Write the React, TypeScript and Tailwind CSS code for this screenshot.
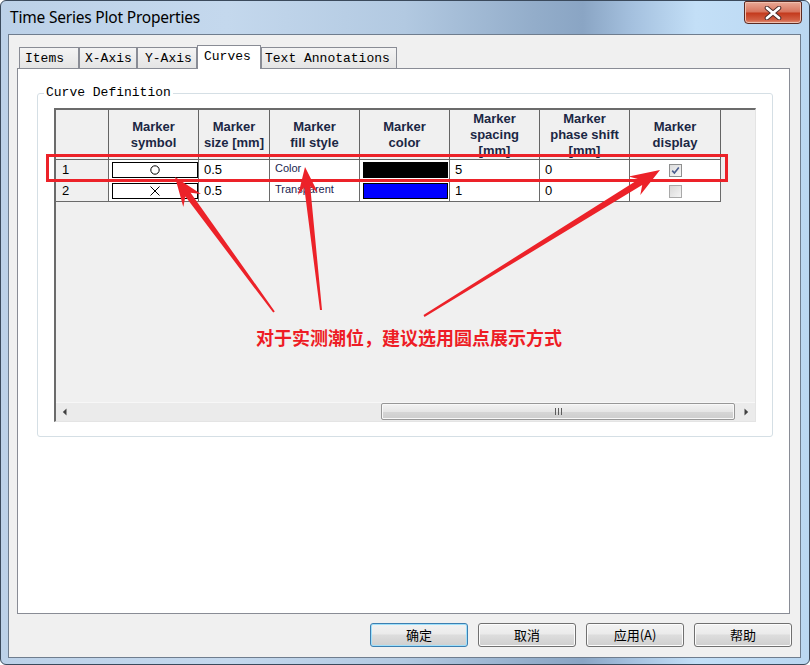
import React from "react";

const colW = [53, 90, 71, 90, 90, 90, 90, 91];

const headers: string[][] = [
  [],
  ["Marker", "symbol"],
  ["Marker", "size [mm]"],
  ["Marker", "fill style"],
  ["Marker", "color"],
  ["Marker", "spacing", "[mm]"],
  ["Marker", "phase shift", "[mm]"],
  ["Marker", "display"],
];

function arrowPts(tx: number, ty: number, hx: number, hy: number, headLen = 26, headHalf = 10, shaftHalf = 3.2, tailHalf = 1) {
  const dx = hx - tx;
  const dy = hy - ty;
  const L = Math.sqrt(dx * dx + dy * dy);
  const ux = dx / L;
  const uy = dy / L;
  const nx = -uy;
  const ny = ux;
  const bx = hx - ux * headLen;
  const by = hy - uy * headLen;
  const p = (x: number, y: number) => `${x.toFixed(1)},${y.toFixed(1)}`;
  return [
    p(tx + nx * tailHalf, ty + ny * tailHalf),
    p(bx + ux * 5 + nx * shaftHalf, by + uy * 5 + ny * shaftHalf),
    p(bx - ux * 2 + nx * headHalf, by - uy * 2 + ny * headHalf),
    p(hx, hy),
    p(bx - ux * 2 - nx * headHalf, by - uy * 2 - ny * headHalf),
    p(bx + ux * 5 - nx * shaftHalf, by + uy * 5 - ny * shaftHalf),
    p(tx - nx * tailHalf, ty - ny * tailHalf),
  ].join(" ");
}

function Checkbox({ checked }: { checked: boolean }) {
  return (
    <div
      className={
        "w-[13px] h-[13px] border flex items-center justify-center " +
        (checked
          ? "border-[#8e8f8f] bg-[linear-gradient(135deg,#dcdcdc,#f6f6f6)]"
          : "border-[#a9a9a9] bg-[linear-gradient(135deg,#d8d8d8,#f4f4f4)]")
      }
    >
      {checked && (
        <svg width="11" height="11" viewBox="0 0 11 11">
          <path d="M2.2 5.6 L4.4 8 L8.8 2.4" fill="none" stroke="#4b5d8f" strokeWidth="1.6" />
        </svg>
      )}
    </div>
  );
}

function DataRow({ idx, symbol, size, fill, color, spacing, phase, checked }: {
  idx: string; symbol: "o" | "x"; size: string; fill: string; color: string; spacing: string; phase: string; checked: boolean;
}) {
  const cell = "h-[21px] border-r border-b border-[#6a6a6a] flex items-center shrink-0";
  return (
    <div className="flex">
      <div className={cell + " bg-[#f0f0f0] pl-[6px] text-[13px] text-black"} style={{ width: colW[0] }}>{idx}</div>
      <div className={cell + " bg-white pl-[3px]"} style={{ width: colW[1] }}>
        <div className="w-[86px] h-[16px] border border-black bg-white flex items-center justify-center">
          {symbol === "o" ? (
            <svg width="12" height="12" viewBox="0 0 12 12"><circle cx="6" cy="6" r="4.2" fill="none" stroke="#000" strokeWidth="1" /></svg>
          ) : (
            <svg width="12" height="12" viewBox="0 0 12 12"><path d="M1.5 1.5 L10.5 10.5 M10.5 1.5 L1.5 10.5" stroke="#000" strokeWidth="1" /></svg>
          )}
        </div>
      </div>
      <div className={cell + " bg-white pl-[5px] text-[13px] text-black"} style={{ width: colW[2] }}>{size}</div>
      <div className={"h-[21px] border-r border-b border-[#6a6a6a] shrink-0 bg-white pl-[5px] pt-[1px] text-[11px] leading-[14px] text-[#1a2550]"} style={{ width: colW[3] }}>{fill}</div>
      <div className={cell + " bg-white pl-[3px]"} style={{ width: colW[4] }}>
        <div className="w-[85px] h-[16px] border border-black" style={{ background: color }} />
      </div>
      <div className={cell + " bg-white pl-[5px] text-[13px] text-black"} style={{ width: colW[5] }}>{spacing}</div>
      <div className={cell + " bg-white pl-[5px] text-[13px] text-black"} style={{ width: colW[6] }}>{phase}</div>
      <div className={cell + " bg-white justify-center pl-[1px]"} style={{ width: colW[7] }}>
        <Checkbox checked={checked} />
      </div>
    </div>
  );
}

function Tab({ label, w, pl, selected }: { label: string; w: number; pl: number; selected?: boolean }) {
  return (
    <div
      className={
        "border-x border-t border-[#898c95] flex justify-start shrink-0 text-[13px] text-black whitespace-nowrap " +
        (selected
          ? "h-[24px] -mb-px bg-white relative z-10 items-start pt-[3px] leading-[16px]"
          : "h-[21px] bg-[linear-gradient(#f4f4f4,#e4e4e4)] items-center leading-[16px] pt-[2px]")
      }
      style={{ width: w, paddingLeft: pl }}
    >
      {label}
    </div>
  );
}

function Button({ label, focused }: { label: string; focused?: boolean }) {
  return (
    <div
      className={
        "w-[98px] h-[24px] rounded-[3px] border flex items-center justify-center text-[13px] text-black font-['Noto_Sans_CJK_SC','Noto_Sans',sans-serif] bg-[linear-gradient(#f2f2f2_0%,#ebebeb_45%,#dddddd_50%,#cfcfcf_100%)] " +
        (focused ? "border-[#3c7fb1] shadow-[inset_0_0_0_1px_#9fe0fb]" : "border-[#707070] shadow-[inset_0_0_0_1px_#fcfcfc]")
      }
    >
      {label}
    </div>
  );
}

export default function App() {
  return (
    <div className="relative w-[810px] h-[665px] font-['Liberation_Sans',Arial,sans-serif]">
      <div className="w-[810px] h-[665px] flex flex-col rounded-[6px] border border-[#3b4a5c] bg-[linear-gradient(90deg,#bcd1e8_0%,#c4d8ed_28%,#b2c9e1_50%,#93adca_66%,#8aa5c4_72%,#a4c0de_78%,#c3dff7_86%,#bad7f1_100%)] overflow-hidden">
        {/* Title bar */}
        <div className="h-[33px] flex items-start shrink-0">
          <div className="pl-[9px] pt-[6px] text-[15.5px] leading-[20px] text-black font-['Noto_Sans',sans-serif] tracking-[-0.2px]">
            Time Series Plot Properties
          </div>
          <div className="ml-auto mr-[7px] mt-0 w-[58px] h-[23px] rounded-b-[4px] rounded-t-[2px] border border-[#5b2a22] bg-[linear-gradient(#e9a996_0%,#d7735c_48%,#c3391c_52%,#d25f43_85%,#e0937b_100%)] shadow-[inset_0_0_0_1px_#f0c0b0] flex items-center justify-center">
            <svg width="20" height="14" viewBox="0 0 20 14">
              <path d="M4 2 L16 12 M16 2 L4 12" stroke="#4a2a28" strokeWidth="4.6" strokeLinecap="round" />
              <path d="M4 2 L16 12 M16 2 L4 12" stroke="#ffffff" strokeWidth="2.8" strokeLinecap="round" />
            </svg>
          </div>
        </div>

        {/* Client area */}
        <div className="ml-[7px] w-[793px] h-[624px] border border-[#6f7d8e] bg-[#f0f0f0] flex flex-col shrink-0">
          {/* Tabs */}
          <div className="mt-[10px] ml-[10px] h-[23px] flex items-end font-['Liberation_Mono',monospace]">
            <Tab label="Items" w={60} pl={5} />
            <Tab label="X-Axis" w={58} pl={5} />
            <Tab label="Y-Axis" w={60} pl={7} />
            <Tab label="Curves" w={64} pl={6} selected />
            <Tab label="Text Annotations" w={136} pl={3} />
          </div>

          {/* Tab panel */}
          <div className="ml-[8px] w-[773px] h-[546px] border border-[#898c95] bg-white shrink-0">
            {/* Group box */}
            <div className="relative ml-[19px] mt-[24px] w-[736px] h-[344px] border border-[#d5dfe5] rounded-[3px]">
              <span className="absolute -top-[9px] left-[6px] bg-white px-[2px] text-[13px] leading-[16px] text-black font-['Liberation_Mono',monospace]">
                Curve Definition
              </span>

              {/* Grid */}
              <div className="ml-[16px] mt-[14px] w-[702px] h-[314px] border-t-2 border-l-2 border-[#6b6b6b] border-r border-b border-r-[#e4e4e4] border-b-[#e4e4e4] bg-[#f0f0f0] flex flex-col">
                {/* Header */}
                <div className="flex">
                  {headers.map((h, i) => (
                    <div
                      key={i}
                      className="h-[50px] border-r border-b border-[#646464] bg-[#f0f0f0] flex flex-col items-center justify-center overflow-hidden text-center leading-[16px] font-bold text-[13px] text-[#1b2744] shrink-0"
                      style={{ width: colW[i] }}
                    >
                      {h.map((t, j) => (
                        <div key={j} className="whitespace-nowrap">{t}</div>
                      ))}
                    </div>
                  ))}
                </div>
                <DataRow idx="1" symbol="o" size="0.5" fill="Color" color="#000000" spacing="5" phase="0" checked={true} />
                <DataRow idx="2" symbol="x" size="0.5" fill="Transparent" color="#0000ff" spacing="1" phase="0" checked={false} />
                <div className="flex-1" />
                {/* Scrollbar */}
                <div className="h-[19px] flex bg-[#ebebeb] border-t border-[#f7f7f7]">
                  <div className="w-[18px] h-full flex items-center justify-center">
                    <svg width="6" height="8" viewBox="0 0 6 8"><path d="M4.5 0.5 L0.8 4 L4.5 7.5 Z" fill="#404040" /></svg>
                  </div>
                  <div className="flex-1 pl-[307px] pr-[1px] flex items-start">
                    <div className="w-[354px] h-[17px] rounded-[2px] border border-[#979797] bg-[linear-gradient(#f3f3f3_0%,#e6e6e6_50%,#d6d6d6_51%,#cdcdcd_100%)] shadow-[inset_0_0_0_1px_#f8f8f8] flex items-center justify-center gap-[2px]">
                      <div className="w-[1px] h-[7px] bg-[#5c5c5c]" />
                      <div className="w-[1px] h-[7px] bg-[#5c5c5c]" />
                      <div className="w-[1px] h-[7px] bg-[#5c5c5c]" />
                    </div>
                  </div>
                  <div className="w-[18px] h-full flex items-center justify-center">
                    <svg width="6" height="8" viewBox="0 0 6 8"><path d="M1.5 0.5 L5.2 4 L1.5 7.5 Z" fill="#404040" /></svg>
                  </div>
                </div>
              </div>
            </div>
          </div>

          {/* Buttons */}
          <div className="mt-[9px] pr-[8px] flex justify-end gap-[10px]">
            <Button label="确定" focused />
            <Button label="取消" />
            <Button label="应用(A)" />
            <Button label="帮助" />
          </div>
        </div>
      </div>

      {/* Annotations overlay */}
      <svg className="absolute inset-0 pointer-events-none" width="810" height="665" viewBox="0 0 810 665">
        <rect x="47.5" y="155.5" width="679" height="25" fill="none" stroke="#ec2229" strokeWidth="3" />
        <polygon points={arrowPts(274, 312, 175, 177, 27, 11, 3.2, 1)} fill="#ec2229" />
        <polygon points={arrowPts(321, 310, 305, 167, 25, 10, 3, 1)} fill="#ec2229" />
        <polygon points={arrowPts(424, 316, 660, 170, 28, 11, 3.4, 1)} fill="#ec2229" />
      </svg>
      <span className="absolute left-[256px] top-[326px] text-[18px] leading-[22px] font-bold text-[#ee1c25] whitespace-nowrap font-['Noto_Sans_CJK_SC','Noto_Sans',sans-serif]">
        对于实测潮位，建议选用圆点展示方式
      </span>
    </div>
  );
}
